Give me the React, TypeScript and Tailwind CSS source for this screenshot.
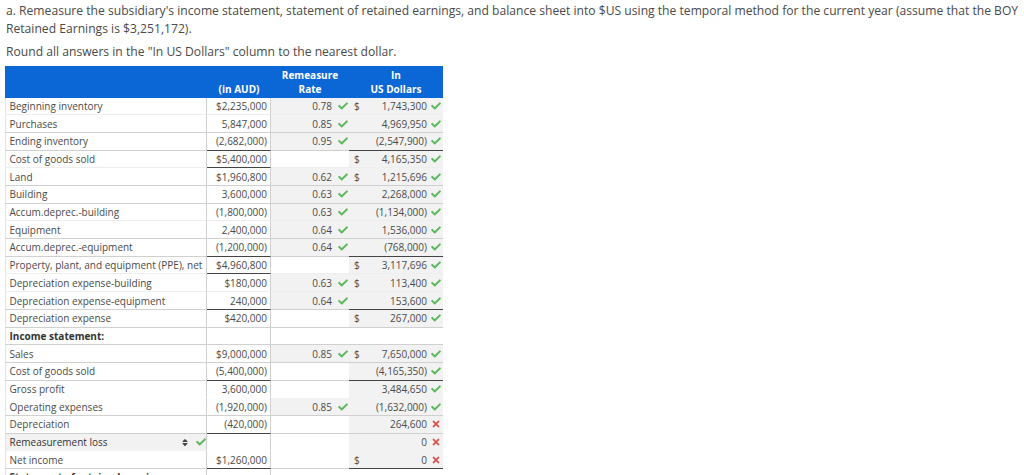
import React from "react";
import { FaCheck, FaTimes, FaSort } from "react-icons/fa";

type R = {
  l: string;
  a?: string;
  r?: string;
  d?: boolean;
  v?: string;
  s?: "ok" | "no";
  b?: string; // base bottom border
  ad?: boolean; // dark bottom in AUD
  vd?: boolean; // dark bottom in value
  bold?: boolean;
  sel?: boolean;
};

const G = "border-b-[#d0d0d0]";
const F = "border-b-[#eeeeee]";
const N = "border-b-transparent";

const rows: R[] = [
  { l: "Beginning inventory", a: "$2,235,000", r: "0.78", d: true, v: "1,743,300", s: "ok", b: F },
  { l: "Purchases", a: "5,847,000", r: "0.85", v: "4,969,950", s: "ok", b: G },
  { l: "Ending inventory", a: "(2,682,000)", r: "0.95", v: "(2,547,900)", s: "ok", b: G, ad: true, vd: true },
  { l: "Cost of goods sold", a: "$5,400,000", d: true, v: "4,165,350", s: "ok", b: F, ad: true },
  { l: "Land", a: "$1,960,800", r: "0.62", d: true, v: "1,215,696", s: "ok", b: G },
  { l: "Building", a: "3,600,000", r: "0.63", v: "2,268,000", s: "ok", b: G },
  { l: "Accum.deprec.-building", a: "(1,800,000)", r: "0.63", v: "(1,134,000)", s: "ok", b: F },
  { l: "Equipment", a: "2,400,000", r: "0.64", v: "1,536,000", s: "ok", b: G },
  { l: "Accum.deprec.-equipment", a: "(1,200,000)", r: "0.64", v: "(768,000)", s: "ok", b: G, ad: true, vd: true },
  { l: "Property, plant, and equipment (PPE), net", a: "$4,960,800", d: true, v: "3,117,696", s: "ok", b: F, ad: true },
  { l: "Depreciation expense-building", a: "$180,000", r: "0.63", d: true, v: "113,400", s: "ok", b: F },
  { l: "Depreciation expense-equipment", a: "240,000", r: "0.64", v: "153,600", s: "ok", b: G, ad: true, vd: true },
  { l: "Depreciation expense", a: "$420,000", d: true, v: "267,000", s: "ok", b: G },
  { l: "Income statement:", bold: true, b: G },
  { l: "Sales", a: "$9,000,000", r: "0.85", d: true, v: "7,650,000", s: "ok", b: G },
  { l: "Cost of goods sold", a: "(5,400,000)", v: "(4,165,350)", s: "ok", b: G, ad: true, vd: true },
  { l: "Gross profit", a: "3,600,000", v: "3,484,650", s: "ok", b: N },
  { l: "Operating expenses", a: "(1,920,000)", r: "0.85", v: "(1,632,000)", s: "ok", b: G },
  { l: "Depreciation", a: "(420,000)", v: "264,600", s: "no", b: G, ad: true },
  { l: "Remeasurement loss", sel: true, v: "0", s: "no", b: N },
  { l: "Net income", a: "$1,260,000", d: true, v: "0", s: "no", b: G, ad: true, vd: true },
  { l: "Statement of retained earnings", bold: true, b: N },
];

function Mark({ s }: { s?: "ok" | "no" }) {
  if (s === "ok") return <FaCheck className="text-[#5cb85c] w-[10px] h-[10px] shrink-0" />;
  if (s === "no") return <FaTimes className="text-[#d9534f] w-[10px] h-[10px] shrink-0" />;
  return <span className="w-[10px] shrink-0" />;
}

function Row({ r }: { r: R }) {
  return (
    <div className="flex h-[17.7px] text-[10px] text-[#4a4a4a] leading-none">
      <div
        className={`w-[202px] shrink-0 box-border border-b flex items-center pl-[3.5px] border-l border-l-[#e4e4e4] border-r border-r-[#d0d0d0] ${r.b} ${
          r.bold ? "font-bold text-[#333333]" : ""
        } ${r.sel ? "bg-[#f2f2f2] text-[#333333] relative" : ""}`}
      >
        <span className="whitespace-nowrap">{r.l}</span>
        {r.sel && (
          <div className="ml-auto flex items-center gap-[7px]">
            <FaSort className="w-[8px] h-[9px] text-[#444444]" />
            <FaCheck className="w-[10px] h-[10px] text-[#5cb85c]" />
          </div>
        )}
      </div>
      <div
        className={`w-[64px] shrink-0 box-border border-b border-r border-r-[#d0d0d0] flex items-center justify-end pr-[3px] ${
          r.ad ? "border-b-[#444444]" : r.b
        }`}
      >
        {r.a}
      </div>
      <div
        className={`w-[78px] shrink-0 box-border border-b flex items-center justify-end pr-[1.5px] gap-[5.5px] ${
          r.r ? "bg-[#f2f2f2]" : ""
        } ${r.b}`}
      >
        {r.r && (
          <>
            <span>{r.r}</span>
            <Mark s="ok" />
          </>
        )}
      </div>
      <div
        className={`w-[94px] shrink-0 box-border border-b flex items-center pl-[5px] pr-[2px] gap-[4px] ${
          r.bold ? "" : "bg-[#f2f2f2]"
        } ${r.vd ? "border-b-[#444444]" : r.b}`}
      >
        {!r.bold && (
          <>
            <span className="w-[6px]">{r.d ? "$" : ""}</span>
            <span className="ml-auto">{r.v}</span>
            <Mark s={r.s} />
          </>
        )}
      </div>
    </div>
  );
}

export default function App() {
  return (
    <div className="w-[1024px] h-[475px] overflow-hidden bg-white text-[#4a4a4a] font-['Open_Sans',sans-serif]">
      <div className="pl-[6px] pt-[2px] text-[12.13px] leading-[18px] w-[1024px] whitespace-nowrap">
        <p>
          a. Remeasure the subsidiary's income statement, statement of retained earnings, and balance sheet into $US using
          the temporal method for the current year (assume that the BOY
        </p>
        <p>Retained Earnings is $3,251,172).</p>
        <p className="mt-[5px]">Round all answers in the "In US Dollars" column to the nearest dollar.</p>
      </div>
      <div className="ml-[5px] mt-[5px] w-[438px]">
        <div className="flex h-[31.6px] bg-[#0b67d6] text-white font-bold text-[10px] leading-[14px]">
          <div className="w-[202px]" />
          <div className="w-[64px] flex items-end justify-center pb-[1.6px]">(in AUD)</div>
          <div className="w-[78px] flex flex-col items-center justify-end pb-[1.6px]">
            <span>Remeasure</span>
            <span>Rate</span>
          </div>
          <div className="w-[94px] flex flex-col items-center justify-end pb-[1.6px]">
            <span>In</span>
            <span>US Dollars</span>
          </div>
        </div>
        {rows.map((r, i) => (
          <Row key={i} r={r} />
        ))}
      </div>
    </div>
  );
}
